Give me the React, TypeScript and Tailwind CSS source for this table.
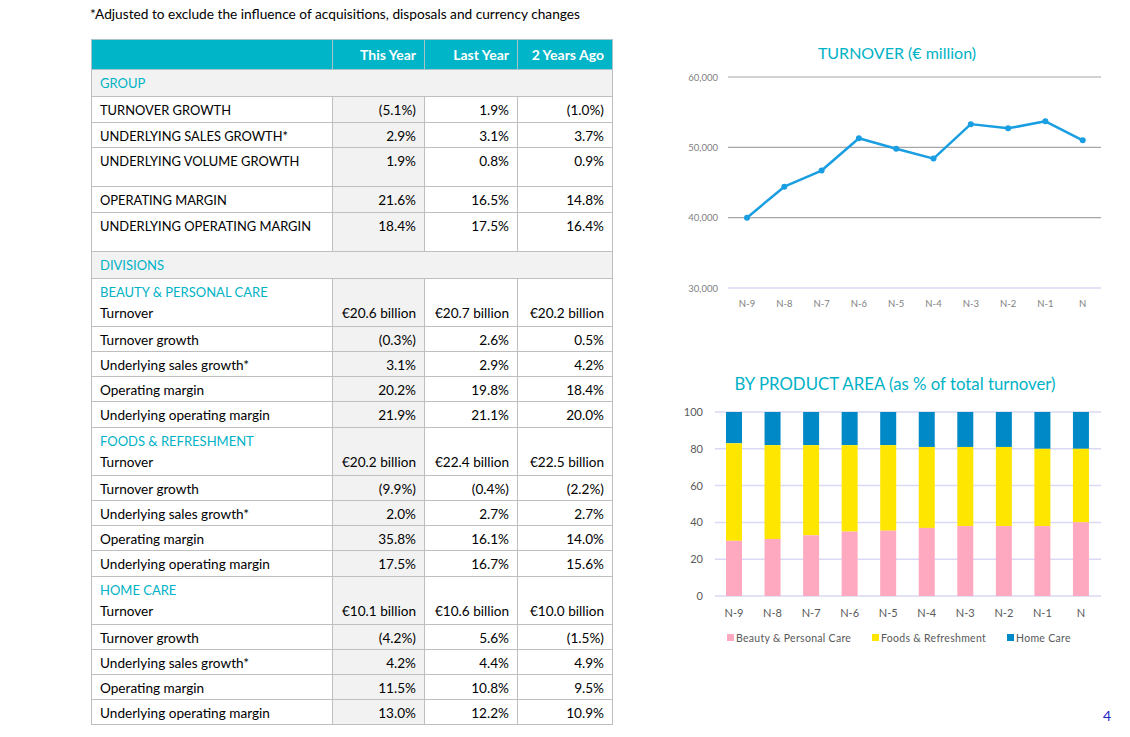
import React from 'react';

type DataRow = {
  kind: 'data';
  label: string;
  sub?: string;
  vals: string[];
  h: number;
};
type SectionRow = { kind: 'section'; label: string; h: number };
type Row = DataRow | SectionRow;

const rows: Row[] = [
  { kind: 'section', label: 'GROUP', h: 27 },
  { kind: 'data', label: 'TURNOVER GROWTH', vals: ['(5.1%)', '1.9%', '(1.0%)'], h: 26 },
  { kind: 'data', label: 'UNDERLYING SALES GROWTH*', vals: ['2.9%', '3.1%', '3.7%'], h: 25 },
  { kind: 'data', label: 'UNDERLYING VOLUME GROWTH', vals: ['1.9%', '0.8%', '0.9%'], h: 39 },
  { kind: 'data', label: 'OPERATING MARGIN', vals: ['21.6%', '16.5%', '14.8%'], h: 26 },
  { kind: 'data', label: 'UNDERLYING OPERATING MARGIN', vals: ['18.4%', '17.5%', '16.4%'], h: 39 },
  { kind: 'section', label: 'DIVISIONS', h: 27 },
  { kind: 'data', sub: 'BEAUTY & PERSONAL CARE', label: 'Turnover', vals: ['€20.6 billion', '€20.7 billion', '€20.2 billion'], h: 48 },
  { kind: 'data', label: 'Turnover growth', vals: ['(0.3%)', '2.6%', '0.5%'], h: 25 },
  { kind: 'data', label: 'Underlying sales growth*', vals: ['3.1%', '2.9%', '4.2%'], h: 25 },
  { kind: 'data', label: 'Operating margin', vals: ['20.2%', '19.8%', '18.4%'], h: 25 },
  { kind: 'data', label: 'Underlying operating margin', vals: ['21.9%', '21.1%', '20.0%'], h: 26 },
  { kind: 'data', sub: 'FOODS & REFRESHMENT', label: 'Turnover', vals: ['€20.2 billion', '€22.4 billion', '€22.5 billion'], h: 48 },
  { kind: 'data', label: 'Turnover growth', vals: ['(9.9%)', '(0.4%)', '(2.2%)'], h: 25 },
  { kind: 'data', label: 'Underlying sales growth*', vals: ['2.0%', '2.7%', '2.7%'], h: 25 },
  { kind: 'data', label: 'Operating margin', vals: ['35.8%', '16.1%', '14.0%'], h: 25 },
  { kind: 'data', label: 'Underlying operating margin', vals: ['17.5%', '16.7%', '15.6%'], h: 26 },
  { kind: 'data', sub: 'HOME CARE', label: 'Turnover', vals: ['€10.1 billion', '€10.6 billion', '€10.0 billion'], h: 48 },
  { kind: 'data', label: 'Turnover growth', vals: ['(4.2%)', '5.6%', '(1.5%)'], h: 25 },
  { kind: 'data', label: 'Underlying sales growth*', vals: ['4.2%', '4.4%', '4.9%'], h: 25 },
  { kind: 'data', label: 'Operating margin', vals: ['11.5%', '10.8%', '9.5%'], h: 25 },
  { kind: 'data', label: 'Underlying operating margin', vals: ['13.0%', '12.2%', '10.9%'], h: 25 },
];

const years = ['N-9', 'N-8', 'N-7', 'N-6', 'N-5', 'N-4', 'N-3', 'N-2', 'N-1', 'N'];
const turnover = [40000, 44400, 46700, 51300, 49800, 48400, 53300, 52700, 53700, 51000];
// pink top, yellow top (cumulative %)
const areas: [number, number][] = [
  [30, 83], [31, 82], [33, 82], [35, 82], [35.5, 82],
  [37, 81], [38, 81], [38, 81], [38, 80], [40, 80],
];

const isUpper = (s: string) => s === s.toUpperCase();

function FinancialTable() {
  return (
    <table className="table-fixed border-collapse w-[521px] text-[13.6px] leading-[16px] text-black">
      <colgroup>
        <col className="w-[241px]" />
        <col className="w-[92px]" />
        <col className="w-[93px]" />
        <col className="w-[95px]" />
      </colgroup>
      <thead>
        <tr className="h-[30px] bg-[#00b5c7] text-white font-bold text-[14px]">
          <th className="border border-[#a9c4c8]" />
          <th className="border border-[#a9c4c8] text-right pr-2">This Year</th>
          <th className="border border-[#a9c4c8] text-right pr-2">Last Year</th>
          <th className="border border-[#a9c4c8] text-right pr-2">2 Years Ago</th>
        </tr>
      </thead>
      <tbody>
        {rows.map((row, i) =>
          row.kind === 'section' ? (
            <tr key={i} style={{ height: row.h }} className="bg-[#f2f2f2]">
              <td colSpan={4} className="border border-[#bfbfbf] pl-2 p-0 align-middle text-[13px] text-[#00b2c6]">
                {row.label}
              </td>
            </tr>
          ) : (
            <tr key={i} style={{ height: row.h }}>
              <td className="border border-[#bfbfbf] pl-2 pt-[5px] pb-0 align-top">
                {row.sub && <div className="text-[13px] text-[#00b2c6] mb-[5px]">{row.sub}</div>}
                <div className={isUpper(row.label) ? 'text-[12.9px]' : ''}>{row.label}</div>
              </td>
              {row.vals.map((v, j) => (
                <td
                  key={j}
                  className={`border border-[#bfbfbf] text-right pr-2 ${row.sub ? 'align-bottom pb-[5px] pt-0' : 'align-top pt-[5px] pb-0'} ${j === 0 ? 'bg-[#f2f2f2]' : ''}`}
                >
                  {v}
                </td>
              ))}
            </tr>
          )
        )}
      </tbody>
    </table>
  );
}

function TurnoverChart() {
  // local coords: page x - 670, page y - 70
  const yOf = (v: number) => 218 - (v - 30000) * 0.007033;
  const xOf = (i: number) => 77 + i * 37.3;
  const pts = turnover.map((v, i) => `${xOf(i)},${yOf(v)}`).join(' ');
  return (
    <svg width={440} height={245} className="block">
      {[60000, 50000, 40000].map((v) => (
        <g key={v}>
          <line x1={58} x2={431} y1={yOf(v)} y2={yOf(v)} stroke="#a6a6a6" strokeWidth={1.2} />
          <text x={48} y={yOf(v) + 3.5} textAnchor="end" fontSize={9.5} fill="#808080">
            {v.toLocaleString('en-US')}
          </text>
        </g>
      ))}
      <line x1={58} x2={431} y1={218} y2={218} stroke="#d9d9f3" strokeWidth={1.5} />
      <text x={48} y={221.5} textAnchor="end" fontSize={9.5} fill="#808080">30,000</text>
      {years.map((y, i) => (
        <text key={y} x={xOf(i)} y={236.5} textAnchor="middle" fontSize={9.5} fill="#808080">
          {y}
        </text>
      ))}
      <polyline points={pts} fill="none" stroke="#1a9ee2" strokeWidth={2.5} strokeLinejoin="round" />
      {turnover.map((v, i) => (
        <circle key={i} cx={xOf(i)} cy={yOf(v)} r={3} fill="#1a9ee2" />
      ))}
    </svg>
  );
}

function ProductAreaChart() {
  // local coords: page x - 670, page y - 400
  const y0 = 196;
  const k = 1.84;
  const xOf = (i: number) => 64 + i * 38.55;
  return (
    <svg width={440} height={250} className="block">
      {[0, 20, 40, 60, 80, 100].map((v) => (
        <g key={v}>
          <line x1={45} x2={431} y1={y0 - v * k} y2={y0 - v * k} stroke="#d9d9f5" strokeWidth={1.5} />
          <text x={33} y={y0 - v * k + 4} textAnchor="end" fontSize={11} fill="#595959">
            {v}
          </text>
        </g>
      ))}
      {areas.map(([p, yl], i) => (
        <g key={i}>
          <rect x={xOf(i) - 8} y={y0 - 100 * k} width={16} height={(100 - yl) * k} fill="#0089c7" />
          <rect x={xOf(i) - 8} y={y0 - yl * k} width={16} height={(yl - p) * k} fill="#ffe600" />
          <rect x={xOf(i) - 8} y={y0 - p * k} width={16} height={p * k} fill="#ffa9c1" />
        </g>
      ))}
      {years.map((y, i) => (
        <text key={y} x={xOf(i)} y={217} textAnchor="middle" fontSize={11} fill="#595959">
          {y}
        </text>
      ))}
      <rect x={57} y={234} width={7} height={7} fill="#ffa9c1" />
      <text x={66} y={241.5} fontSize={10.5} letterSpacing={0.3} fill="#595959">Beauty &amp; Personal Care</text>
      <rect x={202} y={234} width={7} height={7} fill="#ffe600" />
      <text x={211} y={241.5} fontSize={10.5} letterSpacing={0.3} fill="#595959">Foods &amp; Refreshment</text>
      <rect x={337} y={234} width={7} height={7} fill="#0089c7" />
      <text x={346} y={241.5} fontSize={10.5} letterSpacing={0.3} fill="#595959">Home Care</text>
    </svg>
  );
}

export default function App() {
  return (
    <div className="flex w-[1130px] h-[737px] bg-white font-['Lato',sans-serif] overflow-hidden">
      {/* Left: footnote + table */}
      <div className="w-[670px] pl-[90px] pt-[5px]">
        <p className="text-[13.7px] leading-[18px] text-black">
          *Adjusted to exclude the influence of acquisitions, disposals and currency changes
        </p>
        <div className="mt-[16px] pl-px">
          <FinancialTable />
        </div>
      </div>

      {/* Right: charts */}
      <div className="flex-1 flex flex-col">
        <div className="w-[440px] pl-[14px] pt-[43px] text-center text-[16px] leading-[20px] text-[#00b2c6]">
          TURNOVER (€ million)
        </div>
        <div className="mt-[7px]">
          <TurnoverChart />
        </div>
        <div className="w-[440px] pl-[10px] mt-[58px] text-center text-[16.8px] leading-[22px] text-[#00b2c6]">
          BY PRODUCT AREA (as % of total turnover)
        </div>
        <div className="mt-[5px]">
          <ProductAreaChart />
        </div>
        <div className="mt-auto pb-[12px] pr-[19px] text-right text-[14px] leading-[18px] text-[#2323c8]">
          4
        </div>
      </div>
    </div>
  );
}
